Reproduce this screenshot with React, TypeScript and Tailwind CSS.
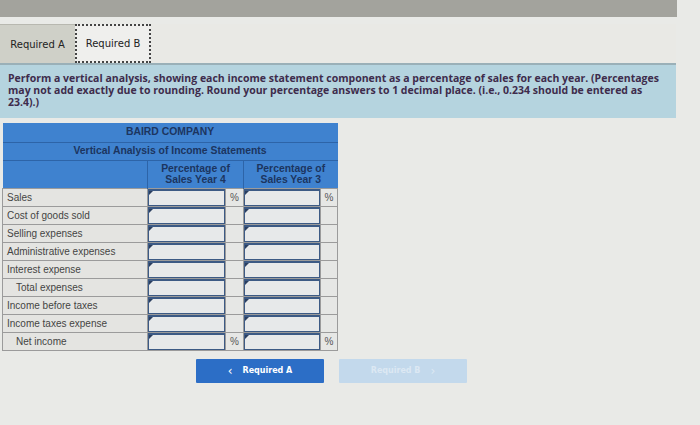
import React from "react";

const rows = [
  { label: "Sales", indent: false, pct: true },
  { label: "Cost of goods sold", indent: false, pct: false },
  { label: "Selling expenses", indent: false, pct: false },
  { label: "Administrative expenses", indent: false, pct: false },
  { label: "Interest expense", indent: false, pct: false },
  { label: "Total expenses", indent: true, pct: false },
  { label: "Income before taxes", indent: false, pct: false },
  { label: "Income taxes expense", indent: false, pct: false },
  { label: "Net income", indent: true, pct: true },
];

function InputCell() {
  return (
    <td className="p-0 h-[17px] border border-[#9b9b9b]">
      <div className="relative h-[17px] bg-[#e7e9ea] border-x-[1.5px] border-t-2 border-b border-[#3c5a85]">
        <span className="absolute left-0 top-0 w-0 h-0 border-t-[4px] border-r-[4px] border-t-[#2b3f60] border-r-transparent" />
      </div>
    </td>
  );
}

function PctCell({ show }: { show: boolean }) {
  return (
    <td className="p-0 h-[17px] border border-[#9b9b9b] bg-[#e6e7e5] text-center text-[10px] text-[#555]">
      {show ? "%" : ""}
    </td>
  );
}

export default function App() {
  return (
    <div className="w-[700px] h-[425px] overflow-hidden bg-[#e9eae7] font-['Liberation_Sans',Arial,sans-serif]">
      <div className="h-[17px] w-[677px] bg-[#a3a39d]" />

      <div className="mt-[7px] flex h-[39px] w-[676px] bg-[#e9e9e5]">
        <div className="w-[75px] h-full bg-[#cfd0c8] border-t border-[#b8b8b0] flex items-center justify-center text-[10px] text-[#222] font-['DejaVu_Sans',Verdana,sans-serif]">
          Required A
        </div>
        <div className="w-[76px] h-full bg-[#efefed] border-2 border-dotted border-[#444] flex items-center justify-center text-[10px] text-[#222] font-['DejaVu_Sans',Verdana,sans-serif]">
          Required B
        </div>
      </div>

      <div className="w-[676px] h-[55px] bg-[#b5d4df] border-t-2 border-[#9ab0b8] pt-[7px] pl-[8px] pr-[14px] text-[10.5px] leading-[12px] font-bold text-[#3e2c4c] font-['Open_Sans',Verdana,sans-serif]">
        Perform a vertical analysis, showing each income statement component as a percentage of sales for each year. (Percentages may not add exactly due to rounding. Round your percentage answers to 1 decimal place. (i.e., 0.234 should be entered as 23.4).)
      </div>

      <table className="mt-[5px] ml-[2px] border-collapse table-fixed w-[335px] text-[10px]">
        <colgroup>
          <col className="w-[145px]" />
          <col className="w-[78px]" />
          <col className="w-[18px]" />
          <col className="w-[77px]" />
          <col className="w-[17px]" />
        </colgroup>
        <thead className="bg-[#3f82cf] text-[#1c355f] font-bold text-[10.4px]">
          <tr>
            <th colSpan={5} className="h-[19px] p-0 border-b border-[#2d64a8] text-center">
              BAIRD COMPANY
            </th>
          </tr>
          <tr>
            <th colSpan={5} className="h-[18px] p-0 border-b border-[#2d64a8] text-center">
              Vertical Analysis of Income Statements
            </th>
          </tr>
          <tr>
            <th className="h-[28px] p-0 border-r border-[#2d64a8]" />
            <th colSpan={2} className="p-0 border-r border-[#2d64a8] leading-[11px] text-center">
              Percentage of
              <br />
              Sales Year 4
            </th>
            <th colSpan={2} className="p-0 leading-[11px] text-center">
              Percentage of
              <br />
              Sales Year 3
            </th>
          </tr>
        </thead>
        <tbody>
          {rows.map((r) => (
            <tr key={r.label}>
              <td
                className={
                  "h-[17px] p-0 border border-[#9b9b9b] bg-[#e4e4e1] text-[#444] whitespace-nowrap " +
                  (r.indent ? "pl-[13px]" : "pl-[4px]")
                }
              >
                {r.label}
              </td>
              <InputCell />
              <PctCell show={r.pct} />
              <InputCell />
              <PctCell show={r.pct} />
            </tr>
          ))}
        </tbody>
      </table>

      <div className="mt-[8px] ml-[196px] flex gap-[15px] font-['DejaVu_Sans',Verdana,sans-serif] text-[8px] font-bold">
        <button className="w-[128px] h-[24px] bg-[#2c6ec6] text-white flex items-center justify-center gap-[10px] rounded-[1px]">
          <span className="text-[12px] font-normal leading-none">‹</span>
          <span>Required A</span>
        </button>
        <button className="w-[128px] h-[24px] bg-[#c3d9ec] text-[#dce8f3] flex items-center justify-center gap-[10px] rounded-[1px]">
          <span>Required B</span>
          <span className="text-[12px] font-normal leading-none">›</span>
        </button>
      </div>
    </div>
  );
}
